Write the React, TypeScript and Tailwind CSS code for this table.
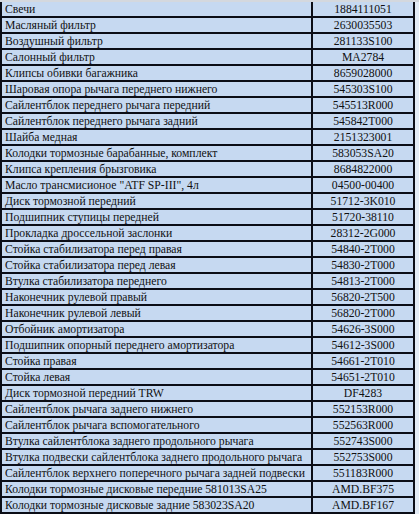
import React from 'react';

const rows: [string, string][] = [
  ['Свечи', '1884111051'],
  ['Масляный фильтр', '2630035503'],
  ['Воздушный фильтр', '281133S100'],
  ['Салонный фильтр', 'MA2784'],
  ['Клипсы обивки багажника', '8659028000'],
  ['Шаровая опора рычага переднего нижнего', '545303S100'],
  ['Сайлентблок переднего рычага передний', '545513R000'],
  ['Сайлентблок переднего рычага задний', '545842T000'],
  ['Шайба медная', '2151323001'],
  ['Колодки тормозные барабанные, комплект', '583053SA20'],
  ['Клипса крепления брызговика', '8684822000'],
  ['Масло трансмисионое "ATF SP-III", 4л', '04500-00400'],
  ['Диск тормозной передний', '51712-3K010'],
  ['Подшипник ступицы передней', '51720-38110'],
  ['Прокладка дроссельной заслонки', '28312-2G000'],
  ['Стойка стабилизатора перед правая', '54840-2T000'],
  ['Стойка стабилизатора перед левая', '54830-2T000'],
  ['Втулка стабилизатора переднего', '54813-2T000'],
  ['Наконечник рулевой правый', '56820-2T500'],
  ['Наконечник рулевой левый', '56820-2T000'],
  ['Отбойник амортизатора', '54626-3S000'],
  ['Подшипник опорный переднего амортизатора', '54612-3S000'],
  ['Стойка правая', '54661-2T010'],
  ['Стойка левая', '54651-2T010'],
  ['Диск тормозной передний TRW', 'DF4283'],
  ['Сайлентблок рычага заднего нижнего', '552153R000'],
  ['Сайлентблок рычага вспомогательного', '552563R000'],
  ['Втулка сайлентблока заднего продольного рычага', '552743S000'],
  ['Втулка подвески сайлентблока заднего продольного рычага', '552753S000'],
  ['Сайлентблок верхнего поперечного рычага задней подвески', '551183R000'],
  ['Колодки тормозные дисковые передние 581013SA25', 'AMD.BF375'],
  ['Колодки тормозные дисковые задние 583023SA20', 'AMD.BF167'],
];

export default function App() {
  return (
    <div className="w-[419px] h-[518px] bg-white overflow-hidden font-['Liberation_Serif','Times_New_Roman',serif] text-[11.7px] text-[#111]">
      <div className="h-[2px] bg-[#d4d8de]" />
      <div className="flex">
        <div className="w-[415px] border-l-2 border-r-2 border-[#0b0d16] bg-[#c6d9f1]">
          {rows.map(([name, code], i) => (
            <div
              key={i}
              className="flex h-[16px] border-b-2 border-[#0b0d16] leading-[15px]"
            >
              <div className="w-[311px] pl-[3px] border-r-2 border-[#0b0d16] whitespace-nowrap overflow-hidden">
                {name}
              </div>
              <div className="flex-1 text-center whitespace-nowrap overflow-hidden">{code}</div>
            </div>
          ))}
        </div>
        <div className="flex-1 bg-[#e3ebf5]" />
      </div>
    </div>
  );
}
